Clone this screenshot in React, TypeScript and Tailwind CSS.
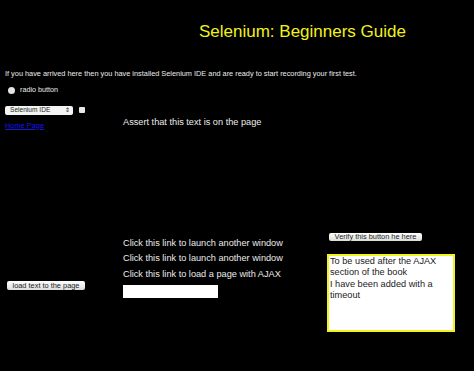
export default function App() {
  return (
    <div className="w-[474px] h-[371px] overflow-hidden bg-black pl-[5px] font-['Liberation_Sans',Arial,sans-serif] text-[#ececec]">
      <h1 className="pl-[194px] pt-[22px] text-[17px] leading-[20px] text-[#f2f21c]">Selenium: Beginners Guide</h1>

      <p className="mt-[26.5px] text-[7.35px] leading-[9px] whitespace-nowrap">
        If you have arrived here then you have installed Selenium IDE and are ready to start recording your first test.
      </p>

      <label className="mt-[8px] flex h-[9px] items-center text-[7.2px]">
        <span className="ml-[3px] h-[7px] w-[7px] rounded-full bg-[#e4e4e4]" />
        <span className="ml-[5px]">radio button</span>
      </label>

      <div className="mt-[11.5px] flex h-[8.5px] items-center">
        <div className="flex h-[8.5px] w-[68px] items-center justify-between rounded-[2px] bg-[#f4f4f4] pl-[5px] pr-[3px] text-[6.6px] leading-none text-[#222]">
          <span>Selenium IDE</span>
          <span className="text-[6px]">⇕</span>
        </div>
        <span className="ml-[6px] h-[6px] w-[6px] rounded-[1px] bg-[#e8e8e8]" />
      </div>

      <div className="mt-[1.5px] flex">
        <div className="flex w-[118px] flex-col items-start">
          <a href="#" className="mt-[4.5px] text-[7.4px] leading-[9px] text-[#1414f0] underline">Home Page</a>
          <button className="ml-[2px] mt-[151.5px] flex h-[9px] w-[78px] items-center justify-center rounded-[2px] bg-gradient-to-b from-white to-[#dcdcdc] text-[7.4px] leading-none text-[#222]">
            load text to the page
          </button>
        </div>

        <div className="flex w-[204px] flex-col items-start">
          <p className="mt-[1px] text-[9.2px] leading-[11px]">Assert that this text is on the page</p>
          <div className="mt-[108px] text-[9.2px] leading-[15.3px]">
            <p>Click this link to launch another window</p>
            <p>Click this link to launch another window</p>
            <p>Click this link to load a page with AJAX</p>
          </div>
          <input type="text" className="mt-[3px] h-[13.5px] w-[95px] bg-white outline-none" />
        </div>

        <div className="flex flex-col items-start">
          <button className="ml-[2px] mt-[117px] flex h-[8px] w-[93px] items-center justify-center rounded-[2px] bg-gradient-to-b from-white to-[#dcdcdc] text-[7.4px] leading-none text-[#222]">
            Verify this button he here
          </button>
          <div className="mt-[13px] h-[78px] w-[128px] border-2 border-[#f2f21c] bg-white px-[1px] text-[9.2px] leading-[11.3px] text-[#222]">
            To be used after the AJAX section of the book
            <br />
            I have been added with a timeout
          </div>
        </div>
      </div>
    </div>
  );
}
